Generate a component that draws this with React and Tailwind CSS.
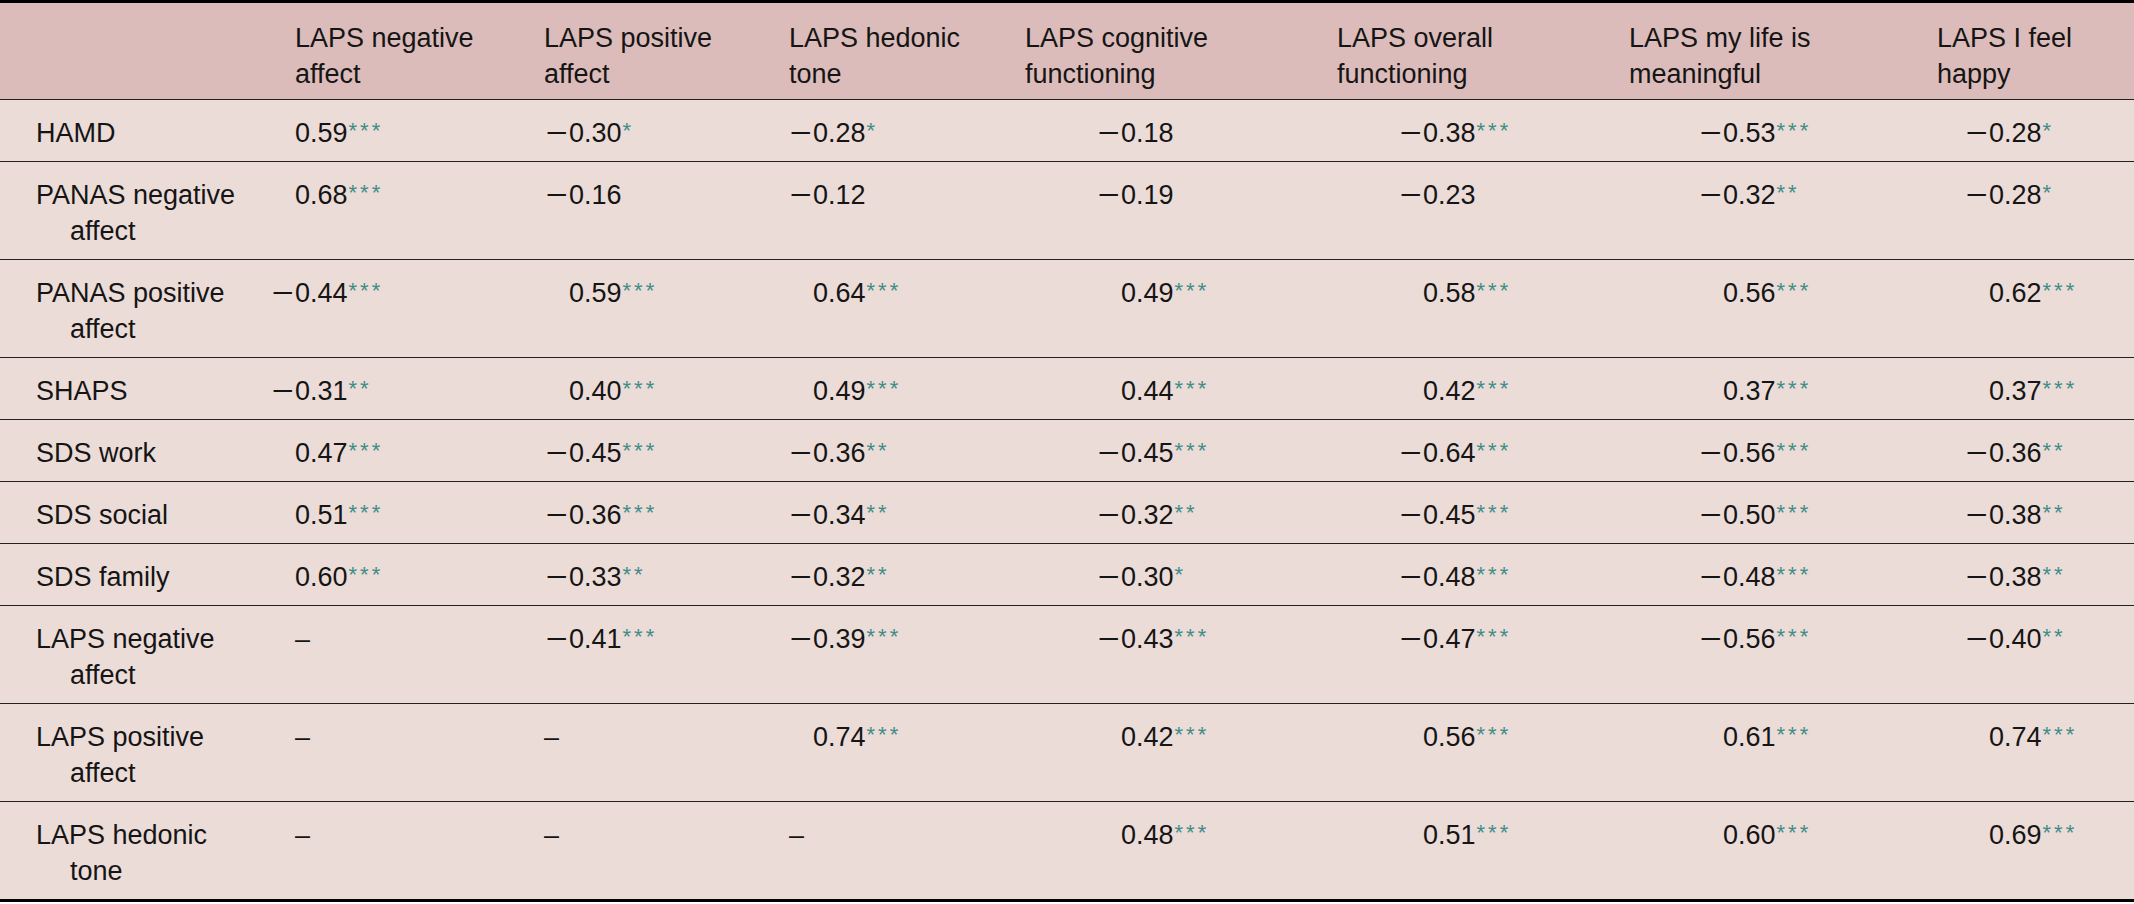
import React from "react";

const headers = [
  ["LAPS negative", "affect"],
  ["LAPS positive", "affect"],
  ["LAPS hedonic", "tone"],
  ["LAPS cognitive", "functioning"],
  ["LAPS overall", "functioning"],
  ["LAPS my life is", "meaningful"],
  ["LAPS I feel", "happy"],
];

const rows = [
  [["HAMD"], ["0.59***", "−0.30*", "−0.28*", "−0.18", "−0.38***", "−0.53***", "−0.28*"]],
  [["PANAS negative", "affect"], ["0.68***", "−0.16", "−0.12", "−0.19", "−0.23", "−0.32**", "−0.28*"]],
  [["PANAS positive", "affect"], ["−0.44***", "0.59***", "0.64***", "0.49***", "0.58***", "0.56***", "0.62***"]],
  [["SHAPS"], ["−0.31**", "0.40***", "0.49***", "0.44***", "0.42***", "0.37***", "0.37***"]],
  [["SDS work"], ["0.47***", "−0.45***", "−0.36**", "−0.45***", "−0.64***", "−0.56***", "−0.36**"]],
  [["SDS social"], ["0.51***", "−0.36***", "−0.34**", "−0.32**", "−0.45***", "−0.50***", "−0.38**"]],
  [["SDS family"], ["0.60***", "−0.33**", "−0.32**", "−0.30*", "−0.48***", "−0.48***", "−0.38**"]],
  [["LAPS negative", "affect"], ["–", "−0.41***", "−0.39***", "−0.43***", "−0.47***", "−0.56***", "−0.40**"]],
  [["LAPS positive", "affect"], ["–", "–", "0.74***", "0.42***", "0.56***", "0.61***", "0.74***"]],
  [["LAPS hedonic", "tone"], ["–", "–", "–", "0.48***", "0.51***", "0.60***", "0.69***"]],
];

const pads = ["pl-[0px]", "pl-[25px]", "pl-[24px]", "pl-[96px]", "pl-[86px]", "pl-[94px]", "pl-[52px]"];

const gridCols =
  "grid grid-cols-[295px_249px_245px_236px_312px_292px_308px_1fr]";

function Value({ v, i }) {
  if (v === "–") {
    return <div className="whitespace-nowrap">–</div>;
  }
  const neg = v.startsWith("−");
  const body = neg ? v.slice(1) : v;
  const m = body.match(/^([0-9.]+)(\**)$/);
  const num = m ? m[1] : body;
  const stars = m ? m[2] : "";
  return (
    <div className={`${pads[i]} whitespace-nowrap`}>
      {neg && (
        <span className="inline-block w-[23px] ml-[-23px] origin-left scale-x-[1.4]">−</span>
      )}
      {num}
      {stars && (
        <span className="relative top-[-4px] ml-[1px] text-[22px] leading-none tracking-[3px] text-[#3f8d87]">
          {stars}
        </span>
      )}
    </div>
  );
}

export default function App() {
  return (
    <div className="w-[2134px] bg-white font-['Liberation_Sans',Arial,sans-serif] text-[27px] leading-[36px] text-[#151515]">
      <div className={`${gridCols} bg-[#dcbcba] border-t-[3px] border-b border-t-black border-b-[#222] pt-[17px] pb-[7px]`}>
        <div />
        {headers.map((h, i) => (
          <div key={i} className="whitespace-nowrap">
            {h[0]}
            <br />
            {h[1]}
          </div>
        ))}
      </div>
      {rows.map(([label, vals], r) => (
        <div
          key={r}
          className={`${gridCols} bg-[#ecdcd8] pt-[15px] pb-[10px] ${
            r === rows.length - 1 ? "border-b-[3px] border-black" : "border-b border-[#222]"
          }`}
        >
          <div className="pl-[70px] indent-[-34px] whitespace-nowrap">
            {label[0]}
            {label[1] && (
              <>
                <br />
                {label[1]}
              </>
            )}
          </div>
          {vals.map((v, i) => (
            <Value key={i} v={v} i={i} />
          ))}
        </div>
      ))}
    </div>
  );
}
